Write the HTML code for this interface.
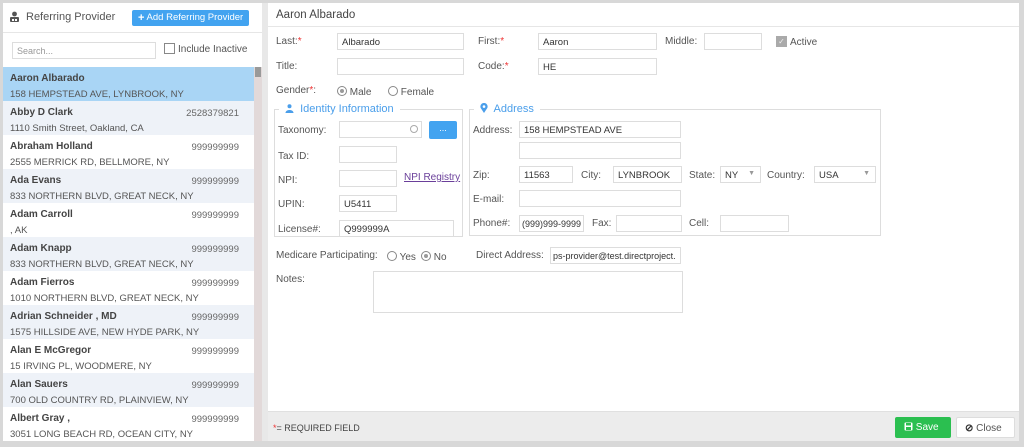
<!DOCTYPE html>
<html><head><meta charset="utf-8">
<style>
*{box-sizing:border-box;margin:0;padding:0}
body{width:1024px;height:447px;background:#d8d8d8;font-family:"Liberation Sans",sans-serif;font-size:10px;color:#555;position:relative;overflow:hidden}
.a{position:absolute}
.inp{position:absolute;height:17px;border:1px solid #ddd;background:#fff;font-size:9.5px;color:#333;padding:3px 4px;white-space:nowrap;overflow:hidden}
.lbl{position:absolute;font-size:10px;color:#555}
.req{color:#e33}
.row{position:absolute;left:3px;width:251px;height:34px;padding:6px 0 0 7px}
.row b{font-weight:bold;color:#444;font-size:10px;display:block}
.row span{display:block;margin-top:5px;font-size:9.5px;color:#555}
.row i{position:absolute;right:15px;top:7px;font-style:normal;color:#666;font-size:9.5px}
.odd{background:#eef2f8}
.fs{position:absolute;border:1px solid #ddd}
.leg{position:absolute;background:#fff;color:#4a9eea;font-size:11px;padding:0 6px}
.radio{display:inline-block;width:10px;height:10px;border:1px solid #888;border-radius:50%;vertical-align:-1px;position:relative;background:#fff}
.radio.on::after{content:"";position:absolute;left:2px;top:2px;width:4px;height:4px;border-radius:50%;background:#999}
</style></head><body>
<div class="a" style="left:3px;top:3px;width:259px;height:438px;background:#fff"></div>
<div class="a" style="left:262px;top:3px;width:6px;height:438px;background:#e8e8e8"></div>
<svg class="a" style="left:9px;top:11px" width="11" height="11" viewBox="0 0 11 11"><circle cx="5.5" cy="3" r="2.4" fill="#555"/><rect x="1" y="6" width="9" height="5" rx="1" fill="#555"/><rect x="3" y="8" width="2" height="2" fill="#fff"/><rect x="6" y="8" width="2" height="2" fill="#fff"/></svg>
<div class="a" style="left:26px;top:11px;font-size:11px;color:#555">Referring Provider</div>
<div class="a" style="left:132px;top:10px;width:117px;height:16px;background:#42a3f0;border-radius:2px;color:#fff;font-size:9.5px;padding:2px 0 0 6px"><b style="font-size:11px;vertical-align:-1px">+</b> Add Referring Provider</div>
<div class="a" style="left:3px;top:32px;width:259px;height:1px;background:#e6e6e6"></div>
<div class="inp" style="left:12px;top:42px;width:144px;height:17px;color:#999;font-size:9px">Search...</div>
<div class="a" style="left:164px;top:43px;width:11px;height:11px;border:1px solid #888;background:#fff"></div>
<div class="a" style="left:178px;top:44px;font-size:10px">Include Inactive</div>
<div class="a" style="left:254px;top:67px;width:8px;height:374px;background:#e2d9d9"></div>
<div class="a" style="left:255px;top:67px;width:6px;height:10px;background:#999"></div>
<div class="row" style="top:67px;background:#a9d5f5"><b>Aaron Albarado</b><span>158 HEMPSTEAD AVE, LYNBROOK, NY</span></div>
<div class="row odd" style="top:101px"><b>Abby D Clark</b><i>2528379821</i><span>1110 Smith Street, Oakland, CA</span></div>
<div class="row" style="top:135px"><b>Abraham Holland</b><i>999999999</i><span>2555 MERRICK RD, BELLMORE, NY</span></div>
<div class="row odd" style="top:169px"><b>Ada Evans</b><i>999999999</i><span>833 NORTHERN BLVD, GREAT NECK, NY</span></div>
<div class="row" style="top:203px"><b>Adam Carroll</b><i>999999999</i><span>, AK</span></div>
<div class="row odd" style="top:237px"><b>Adam Knapp</b><i>999999999</i><span>833 NORTHERN BLVD, GREAT NECK, NY</span></div>
<div class="row" style="top:271px"><b>Adam Fierros</b><i>999999999</i><span>1010 NORTHERN BLVD, GREAT NECK, NY</span></div>
<div class="row odd" style="top:305px"><b>Adrian Schneider , MD</b><i>999999999</i><span>1575 HILLSIDE AVE, NEW HYDE PARK, NY</span></div>
<div class="row" style="top:339px"><b>Alan E McGregor</b><i>999999999</i><span>15 IRVING PL, WOODMERE, NY</span></div>
<div class="row odd" style="top:373px"><b>Alan Sauers</b><i>999999999</i><span>700 OLD COUNTRY RD, PLAINVIEW, NY</span></div>
<div class="row" style="top:407px;height:34px;overflow:hidden"><b>Albert Gray ,</b><i>999999999</i><span>3051 LONG BEACH RD, OCEAN CITY, NY</span></div>

<div class="a" style="left:268px;top:3px;width:751px;height:438px;background:#fff"></div>
<div class="a" style="left:276px;top:9px;font-size:11.5px;color:#444">Aaron Albarado</div>
<div class="a" style="left:268px;top:26px;width:751px;height:1px;background:#e6e6e6"></div>

<div class="lbl" style="left:276px;top:36px">Last:<span class="req">*</span></div>
<div class="inp" style="left:337px;top:33px;width:127px">Albarado</div>
<div class="lbl" style="left:478px;top:36px">First:<span class="req">*</span></div>
<div class="inp" style="left:538px;top:33px;width:119px">Aaron</div>
<div class="lbl" style="left:665px;top:36px">Middle:</div>
<div class="inp" style="left:704px;top:33px;width:58px"></div>
<div class="a" style="left:776px;top:36px;width:11px;height:11px;background:#aaa;color:#eee;font-size:8px;text-align:center;line-height:11px">✓</div>
<div class="lbl" style="left:790px;top:37px">Active</div>

<div class="lbl" style="left:276px;top:61px">Title:</div>
<div class="inp" style="left:337px;top:58px;width:127px"></div>
<div class="lbl" style="left:478px;top:61px">Code:<span class="req">*</span></div>
<div class="inp" style="left:538px;top:58px;width:119px">HE</div>

<div class="lbl" style="left:276px;top:85px">Gender<span class="req">*</span>:</div>
<div class="lbl" style="left:337px;top:86px"><span class="radio on"></span> Male</div>
<div class="lbl" style="left:388px;top:86px"><span class="radio"></span> Female</div>

<div class="fs" style="left:274px;top:109px;width:189px;height:128px"></div>
<div class="leg" style="left:279px;top:103px"><svg width="9" height="9" viewBox="0 0 9 9" style="vertical-align:-1px"><circle cx="4.5" cy="2.2" r="2" fill="#4a9eea"/><path d="M0.5 9 C0.5 5 8.5 5 8.5 9Z" fill="#4a9eea"/></svg>&nbsp; Identity Information</div>
<div class="lbl" style="left:278px;top:125px">Taxonomy:</div>
<div class="inp" style="left:339px;top:121px;width:83px"></div>
<div class="a" style="left:410px;top:125px;width:8px;height:8px;border:1px solid #aaa;border-radius:50%"></div>
<div class="a" style="left:429px;top:121px;width:28px;height:18px;background:#42a3f0;border-radius:2px;color:#fff;text-align:center;font-size:9px;line-height:14px">...</div>
<div class="lbl" style="left:278px;top:151px">Tax ID:</div>
<div class="inp" style="left:339px;top:146px;width:58px"></div>
<div class="lbl" style="left:278px;top:175px">NPI:</div>
<div class="inp" style="left:339px;top:170px;width:58px"></div>
<div class="lbl" style="left:404px;top:172px;color:#6a3f9a;text-decoration:underline">NPI Registry</div>
<div class="lbl" style="left:278px;top:199px">UPIN:</div>
<div class="inp" style="left:339px;top:195px;width:58px">U5411</div>
<div class="lbl" style="left:278px;top:224px">License#:</div>
<div class="inp" style="left:339px;top:220px;width:115px">Q999999A</div>

<div class="fs" style="left:469px;top:109px;width:412px;height:127px"></div>
<div class="leg" style="left:474px;top:103px"><svg width="8" height="10" viewBox="0 0 8 10" style="vertical-align:-1px"><path d="M4 10 L0.7 5 A3.6 3.6 0 1 1 7.3 5Z" fill="#4a9eea"/><circle cx="4" cy="3.6" r="1.3" fill="#fff"/></svg>&nbsp; Address</div>
<div class="lbl" style="left:473px;top:125px">Address:</div>
<div class="inp" style="left:519px;top:121px;width:162px">158 HEMPSTEAD AVE</div>
<div class="inp" style="left:519px;top:142px;width:162px"></div>
<div class="lbl" style="left:473px;top:170px">Zip:</div>
<div class="inp" style="left:519px;top:166px;width:54px">11563</div>
<div class="lbl" style="left:581px;top:170px">City:</div>
<div class="inp" style="left:613px;top:166px;width:69px">LYNBROOK</div>
<div class="lbl" style="left:689px;top:170px">State:</div>
<div class="inp" style="left:720px;top:166px;width:41px">NY<span style="position:absolute;right:5px;top:3px;color:#999;font-size:7px">▼</span></div>
<div class="lbl" style="left:767px;top:170px">Country:</div>
<div class="inp" style="left:814px;top:166px;width:62px">USA<span style="position:absolute;right:5px;top:3px;color:#999;font-size:7px">▼</span></div>
<div class="lbl" style="left:473px;top:194px">E-mail:</div>
<div class="inp" style="left:519px;top:190px;width:162px"></div>
<div class="lbl" style="left:473px;top:218px">Phone#:</div>
<div class="inp" style="left:519px;top:215px;width:65px;font-size:9px;padding-left:2px">(999)999-9999</div>
<div class="lbl" style="left:592px;top:218px">Fax:</div>
<div class="inp" style="left:616px;top:215px;width:66px"></div>
<div class="lbl" style="left:689px;top:218px">Cell:</div>
<div class="inp" style="left:720px;top:215px;width:69px"></div>

<div class="lbl" style="left:276px;top:250px">Medicare Participating:</div>
<div class="lbl" style="left:387px;top:251px"><span class="radio"></span> Yes</div>
<div class="lbl" style="left:421px;top:251px"><span class="radio on"></span> No</div>
<div class="lbl" style="left:476px;top:250px">Direct Address:</div>
<div class="inp" style="left:550px;top:247px;width:131px;font-size:9px;padding-left:2px">ps-provider@test.directproject.</div>
<div class="lbl" style="left:276px;top:274px">Notes:</div>
<div class="inp" style="left:373px;top:271px;width:310px;height:42px"></div>

<div class="a" style="left:268px;top:411px;width:751px;height:30px;background:#ececec;border-top:1px solid #e0e0e0"></div>
<div class="a" style="left:273px;top:423px;font-size:9px;color:#444"><span class="req">*</span>= REQUIRED FIELD</div>
<div class="a" style="left:895px;top:417px;width:56px;height:21px;background:#2bbf50;border-radius:2px;color:#fff;font-size:10px;padding:5px 0 0 9px"><svg width="9" height="9" viewBox="0 0 9 9" style="vertical-align:-1px"><rect x="0.5" y="0.5" width="8" height="8" rx="1" fill="#fff"/><rect x="2" y="1" width="5" height="2.5" fill="#2bbf50"/><rect x="2" y="5" width="5" height="3" fill="#2bbf50"/></svg> Save</div>
<div class="a" style="left:956px;top:417px;width:59px;height:21px;background:#fff;border:1px solid #ddd;border-radius:2px;color:#555;font-size:10px;padding:5px 0 0 8px"><b style="color:#333">⊘</b> Close</div>
</body></html>
